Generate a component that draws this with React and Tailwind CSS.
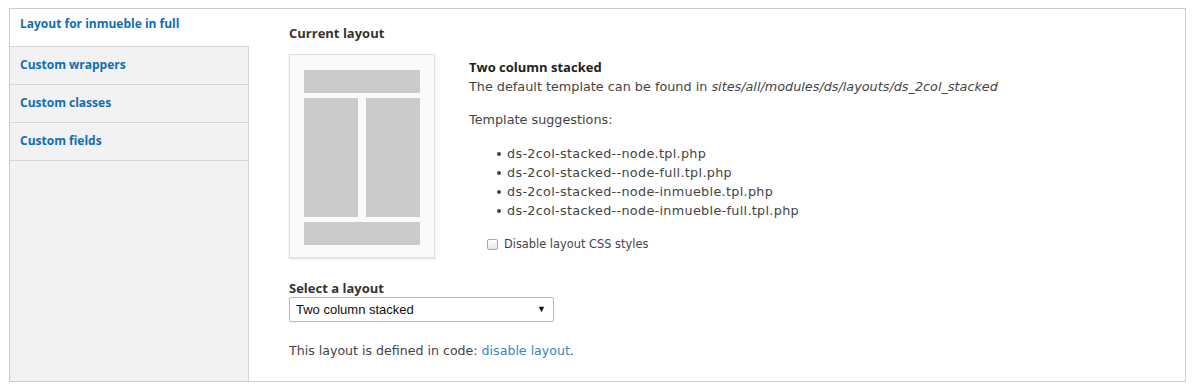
import React from 'react';

const tabs = ['Layout for inmueble in full', 'Custom wrappers', 'Custom classes', 'Custom fields'];

const suggestions = [
  'ds-2col-stacked--node.tpl.php',
  'ds-2col-stacked--node-full.tpl.php',
  'ds-2col-stacked--node-inmueble.tpl.php',
  'ds-2col-stacked--node-inmueble-full.tpl.php',
];

const body = { fontFamily: '"DejaVu Sans", Verdana, sans-serif' };
const head = { fontFamily: '"Open Sans", "Noto Sans", sans-serif' };

const Preview = () => (
  <div className="w-[146px] h-[204px] shrink-0 bg-[#fafafa] border border-[#e2e2e2] shadow-[0_1px_2px_rgba(0,0,0,0.15)] px-[14px] pt-[15px] flex flex-col gap-[5px]">
    <div className="h-[23px] bg-[#cbcbcb]" />
    <div className="flex gap-[8px] h-[119px]">
      <div className="flex-1 bg-[#cbcbcb]" />
      <div className="flex-1 bg-[#cbcbcb]" />
    </div>
    <div className="h-[23px] bg-[#cbcbcb]" />
  </div>
);

export default function App() {
  return (
    <div className="bg-white w-[1200px] h-[391px] pt-[8px] pl-[9px]">
      <div className="w-[1177px] h-[374px] border border-[#cccccc] flex">
        {/* vertical tabs */}
        <div className="w-[239px] shrink-0 flex flex-col" style={head}>
          {tabs.map((t, i) => (
            <div
              key={t}
              className={
                i === 0
                  ? 'h-[38px] bg-white pl-[10px] pt-[6px] text-[12px] font-bold text-[#0f6db6] border-b border-[#d4d4d4]'
                  : 'h-[38px] bg-[#f2f2f2] pl-[10px] pt-[9px] text-[12px] font-bold text-[#0f6db6] border-b border-r border-[#d4d4d4]'
              }
            >
              {t}
            </div>
          ))}
          <div className="flex-1 bg-[#f2f2f2] border-r border-[#d4d4d4]" />
        </div>

        {/* content */}
        <div className="flex-1 pl-[40px] pt-[15px] text-[#333333]">
          <h3 className="text-[13px] font-bold leading-[18px] text-[#333]" style={head}>
            Current layout
          </h3>
          <div className="flex mt-[12px]">
            <Preview />
            <div className="ml-[34px] pt-[4px] text-[12.8px] leading-[19px]" style={body}>
              <div className="text-[13px] font-bold text-[#222]" style={head}>
                Two column stacked
              </div>
              <div className="text-[#444]">
                The default template can be found in <em>sites/all/modules/ds/layouts/ds_2col_stacked</em>
              </div>
              <div className="mt-[14px] text-[#444]">Template suggestions:</div>
              <ul className="mt-[15px] pl-[28px] text-[#444] tracking-[0.3px]">
                {suggestions.map((s) => (
                  <li key={s} className="flex items-center gap-[6px]">
                    <span className="w-[4px] h-[4px] rounded-full bg-[#444]" />
                    {s}
                  </li>
                ))}
              </ul>
              <label className="mt-[15px] ml-[18px] flex items-center gap-[6px] text-[11.4px] text-[#444]">
                <span className="w-[11px] h-[11px] rounded-[2px] border border-[#a9a9a9] bg-gradient-to-b from-white to-[#e6e6e6]" />
                Disable layout CSS styles
              </label>
            </div>
          </div>

          <div className="mt-[22px] text-[13px] font-bold leading-[16px] text-[#333]" style={head}>
            Select a layout
          </div>
          <div
            className="mt-[1px] w-[265px] h-[25px] border border-[#9ec1ef] rounded-[2px] flex items-center justify-between pl-[6px] pr-[7px] text-[13px] text-[#111] shadow-[0_0_1px_#b9d4f5]"
            style={{ fontFamily: '"Liberation Sans", Arial, sans-serif' }}
          >
            <span>Two column stacked</span>
            <span className="text-[9px]">▼</span>
          </div>
          <p className="mt-[20px] text-[12.6px] text-[#444]" style={body}>
            This layout is defined in code: <a className="text-[#3a84c0]">disable layout</a>.
          </p>
        </div>
      </div>
    </div>
  );
}
